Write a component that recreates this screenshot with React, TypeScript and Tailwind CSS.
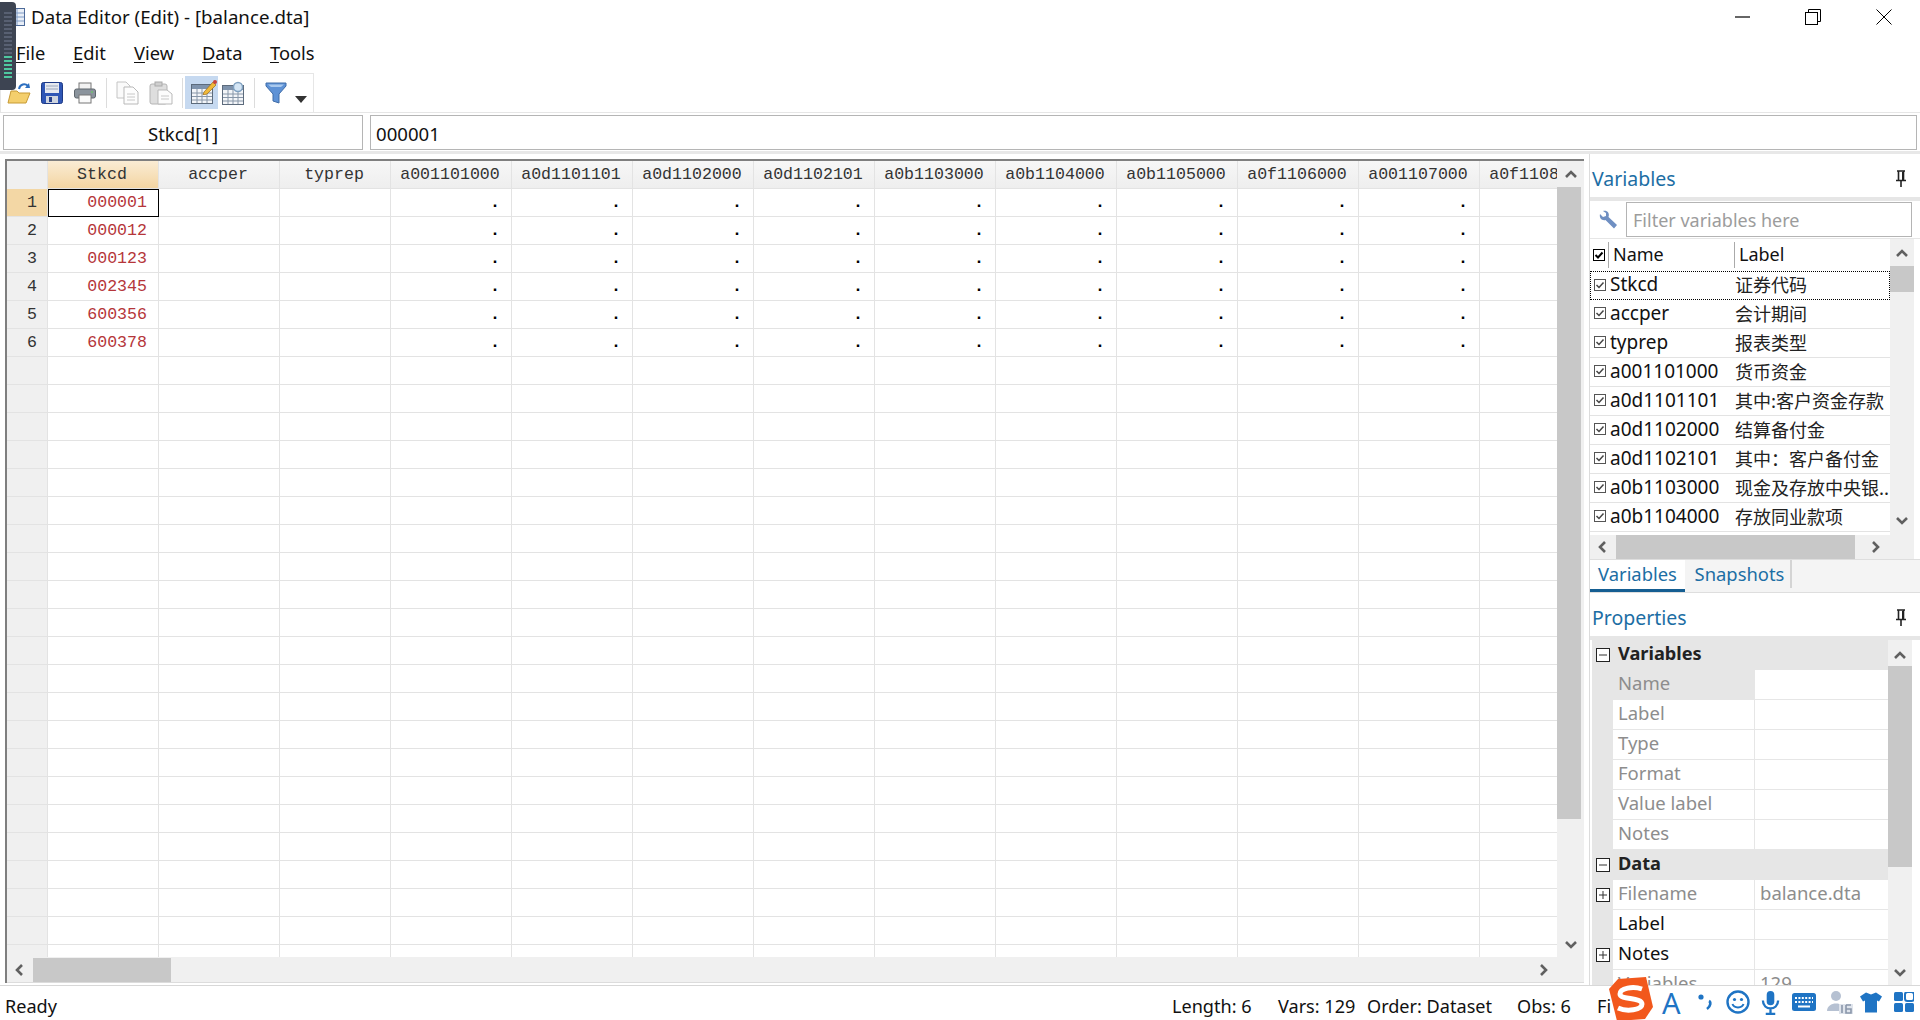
import type { ReactNode } from "react";

const cjk = "font-['Noto_Sans_CJK_SC','Noto_Sans',sans-serif]";

const colWidths = [111, 121, 111, 121, 121, 121, 121, 121, 121, 121, 121, 121, 121, 121];
const colNames = [
  "Stkcd",
  "accper",
  "typrep",
  "a001101000",
  "a0d1101101",
  "a0d1102000",
  "a0d1102101",
  "a0b1103000",
  "a0b1104000",
  "a0b1105000",
  "a0f1106000",
  "a001107000",
  "a0f1108000",
];
const stkcd = ["000001", "000012", "000123", "002345", "600356", "600378"];

const variables = [
  ["Stkcd", "证券代码"],
  ["accper", "会计期间"],
  ["typrep", "报表类型"],
  ["a001101000", "货币资金"],
  ["a0d1101101", "其中:客户资金存款"],
  ["a0d1102000", "结算备付金"],
  ["a0d1102101", "其中：客户备付金"],
  ["a0b1103000", "现金及存放中央银.."],
  ["a0b1104000", "存放同业款项"],
];

const Chevron = ({ dir, className }: { dir: "up" | "down" | "left" | "right"; className?: string }) => {
  const d = {
    up: "M2 9 L7 4 L12 9",
    down: "M2 5 L7 10 L12 5",
    left: "M9 2 L4 7 L9 12",
    right: "M5 2 L10 7 L5 12",
  }[dir];
  return (
    <svg viewBox="0 0 14 14" className={`w-[14px] h-[14px] ${className ?? ""}`}>
      <path d={d} fill="none" stroke="#606060" strokeWidth="2.6" />
    </svg>
  );
};

const Pin = () => (
  <svg viewBox="0 0 14 18" className="w-[14px] h-[18px]">
    <path d="M3 1 H11 M4.5 1 V10 M9.5 1 V10 M2 10.5 H12 M7 11 V17" fill="none" stroke="#222" strokeWidth="1.6" />
    <path d="M8 2 H9.5 V10 H8 Z" fill="#222" />
  </svg>
);

const GridIcon = ({ className }: { className?: string }) => (
  <svg viewBox="0 0 22 20" className={className}>
    <rect x="0.5" y="0.5" width="21" height="19" fill="#f3f5f8" stroke="#5d6b7c" />
    <rect x="1" y="1" width="20" height="4" fill="#7f93ac" />
    <path d="M1 9 H21 M1 12.5 H21 M1 16 H21 M6 5 V19 M11 5 V19 M16 5 V19" stroke="#8796a8" strokeWidth="1" />
  </svg>
);

const ToolbarIcons = () => (
  <div className="flex items-center h-full pl-[6px] pb-[1px]">
    <svg viewBox="0 0 24 24" className="w-[24px] h-[24px]">
      <path d="M1 22 L4 10 H10 L12 12 H23 L19 22 Z" fill="#f4cf6d" stroke="#c79a35" />
      <path d="M12 8 C13 3 18 2 21 5" fill="none" stroke="#2c6fc0" strokeWidth="2" />
      <path d="M18 7 L23 7 L22 2 Z" fill="#2c6fc0" />
    </svg>
    <svg viewBox="0 0 22 22" className="w-[22px] h-[22px] ml-[10px]">
      <rect x="0.5" y="0.5" width="21" height="21" rx="2" fill="#2f56b5" stroke="#1e3a85" />
      <rect x="4" y="1" width="14" height="10" fill="#e6e9ef" />
      <path d="M5 4 H17 M5 7 H17" stroke="#9aa6bd" />
      <rect x="5" y="14" width="12" height="7" fill="#cfd5df" />
      <rect x="8" y="15" width="3" height="5" fill="#27408a" />
    </svg>
    <svg viewBox="0 0 22 22" className="w-[22px] h-[22px] ml-[11px]">
      <rect x="5" y="1" width="12" height="7" fill="#f2f2f2" stroke="#777" />
      <rect x="0.5" y="7" width="21" height="9" rx="2" fill="#8a939c" stroke="#5f666d" />
      <rect x="5" y="13" width="12" height="8" fill="#fafafa" stroke="#777" />
      <circle cx="18" cy="10" r="1" fill="#6ec26e" />
    </svg>
    <div className="w-[1px] h-[30px] bg-[#dcdcdc] ml-[10px]" />
    <svg viewBox="0 0 24 24" className="w-[24px] h-[24px] ml-[9px]">
      <path d="M1 1 H10 L14 5 V17 H1 Z" fill="#fafafa" stroke="#c4c4c4" />
      <path d="M8 6 H17 L22 11 V23 H8 Z" fill="#fdfdfd" stroke="#b9b9b9" />
      <path d="M11 13 H19 M11 16 H19 M11 19 H19" stroke="#c8c8c8" />
    </svg>
    <svg viewBox="0 0 24 24" className="w-[24px] h-[24px] ml-[9px]">
      <rect x="1" y="3" width="17" height="20" rx="2" fill="#dedede" stroke="#b4b4b4" />
      <rect x="6" y="1" width="7" height="4" fill="#cfcfcf" stroke="#aaa" />
      <path d="M9 9 H18 L23 13 V23 H9 Z" fill="#fcfcfc" stroke="#b9b9b9" />
      <path d="M12 15 H20 M12 18 H20" stroke="#c8c8c8" />
    </svg>
    <div className="w-[1px] h-[30px] bg-[#dcdcdc] ml-[9px]" />
    <div className="relative w-[33px] h-[33px] bg-[#c6d9f0] ml-[2px] flex items-center justify-center">
      <GridIcon className="w-[22px] h-[20px] mt-[3px]" />
      <svg viewBox="0 0 16 16" className="absolute right-0 top-[3px] w-[16px] h-[16px]">
        <path d="M2 13 L11 3 L14 6 L5 15 L1 16 Z" fill="#f0b93a" stroke="#9a6a1a" strokeWidth="0.7" />
        <circle cx="13" cy="3" r="2" fill="#c9453b" />
      </svg>
    </div>
    <div className="relative w-[22px] h-[24px] ml-[4px]">
      <GridIcon className="w-[22px] h-[20px] mt-[4px]" />
      <svg viewBox="0 0 12 12" className="absolute right-0 top-0 w-[12px] h-[12px]">
        <circle cx="6" cy="6" r="4.5" fill="#d5e6f5" stroke="#7fa0c0" strokeWidth="1.4" />
      </svg>
    </div>
    <div className="w-[1px] h-[30px] bg-[#dcdcdc] ml-[10px]" />
    <svg viewBox="0 0 22 22" className="w-[22px] h-[22px] ml-[10px]">
      <path d="M1 1 H21 V4 L14 12 V21 L8 19 V12 L1 4 Z" fill="#5e92d6" stroke="#3f6ca8" />
      <path d="M3 2.5 H19 L16 5 H6 Z" fill="#a9c9ee" />
    </svg>
    <svg viewBox="0 0 12 7" className="w-[12px] h-[7px] ml-[8px] mt-[14px]">
      <path d="M0 0 H12 L6 7 Z" fill="#333" />
    </svg>
  </div>
);

const MenuItem = ({ first, rest, className }: { first: string; rest: string; className: string }) => (
  <span className={className}>
    <span className="underline underline-offset-2 decoration-1">{first}</span>
    {rest}
  </span>
);

const DataGrid = () => {
  const rows = Array.from({ length: 28 }, (_, i) => i);
  return (
    <div className="flex-1 min-w-0 flex flex-col overflow-hidden bg-white font-['Liberation_Mono',monospace] text-[16.6px] leading-[28px] text-[#333]">
      <div className="flex h-[28px] shrink-0">
        <div className="w-[41px] shrink-0 bg-[#f0f0f0] border-r border-[#e3e3e3]" />
        {colNames.map((name, i) => (
          <div
            key={name}
            style={{ width: colWidths[i] }}
            className={`shrink-0 text-center pr-[2px] border-r border-b border-[#e3e3e3] bg-gradient-to-b ${
              i === 0 ? "from-[#faecd4] to-[#f3d5a2]" : "from-[#f7f7f7] to-[#eeeeee]"
            }`}
          >
            {name}
          </div>
        ))}
      </div>
      {rows.map((r) => (
        <div key={r} className="flex h-[28px] shrink-0">
          <div
            className={`w-[41px] shrink-0 text-center pl-[10px] border-r border-b border-[#e3e3e3] ${
              r === 0 ? "bg-[#f3d7a5]" : "bg-[#f0f0f0]"
            }`}
          >
            {r < 6 ? r + 1 : ""}
          </div>
          {colNames.map((name, i) => (
            <div
              key={name}
              style={{ width: colWidths[i] }}
              className={`shrink-0 text-right pr-[11px] border-r border-b ${
                i === 0 && r === 0 ? "border-black shadow-[inset_1px_1px_0_0_#000]" : "border-[#e3e3e3]"
              } ${i === 0 ? "text-[#b5363a]" : "text-black font-bold"}`}
            >
              {r < 6 ? (i === 0 ? stkcd[r] : i > 2 && i < 12 ? "." : "") : ""}
            </div>
          ))}
        </div>
      ))}
    </div>
  );
};

const VCheck = ({ strong }: { strong?: boolean }) => (
  <svg viewBox="0 0 12 12" className="w-[12px] h-[12px] shrink-0">
    <rect x="0.5" y="0.5" width="11" height="11" fill="#fff" stroke={strong ? "#000" : "#555"} />
    <path d="M2.5 6 L5 8.5 L9.5 3.5" fill="none" stroke={strong ? "#000" : "#444"} strokeWidth={strong ? 2 : 1.5} />
  </svg>
);

const Box = ({ plus }: { plus?: boolean }) => (
  <svg viewBox="0 0 14 14" className="w-[14px] h-[14px]">
    <rect x="0.5" y="0.5" width="13" height="13" fill="#fff" stroke="#222" />
    <path d={plus ? "M3 7 H11 M7 3 V11" : "M3 7 H11"} stroke="#333" />
  </svg>
);

const PanelTitle = ({ children, className }: { children: ReactNode; className: string }) => (
  <div className={`flex items-center justify-between pl-[2px] pr-[12px] ${className}`}>
    <span className="text-[19.5px] text-[#1c6ea4]">{children}</span>
    <Pin />
  </div>
);

const VariablesPanel = () => (
  <>
    <PanelTitle className="h-[43px] pt-[7px]">Variables</PanelTitle>
    <div className="h-[4px] bg-[#e6e6e6]" />
    <div className="h-[38px] flex items-center border-b border-[#e6e6e6]">
      <svg viewBox="0 0 20 20" className="w-[20px] h-[20px] ml-[8px]">
        <path d="M2 4 L5 7 L8 6 L8 3 L5 1 C9 0 12 3 10.5 7 L19 15 L16 18.5 L7.5 10 C4 11 1 8 2 4 Z" fill="#6f8fc2" />
      </svg>
      <div className="ml-[8px] w-[286px] h-[35px] border border-[#b4b4b4] pl-[6px] text-[18px] leading-[35px] text-[#9c9c9c]">
        Filter variables here
      </div>
    </div>
    <div className="flex h-[296px]">
      <div className="w-[300px] shrink-0 flex flex-col overflow-hidden">
        <div className="flex items-center h-[32px] text-[18px] shrink-0">
          <div className="ml-[3px]">
            <VCheck strong />
          </div>
          <div className="h-[26px] w-[1px] bg-[#aaa] ml-[3px]" />
          <span className="w-[125px] pl-[4px] pb-[2px]">Name</span>
          <div className="h-[26px] w-[1px] bg-[#aaa]" />
          <span className="pl-[4px] pb-[2px]">Label</span>
        </div>
        {variables.map(([name, label], i) => (
          <div
            key={name}
            className={`flex items-center h-[29px] shrink-0 pb-[2px] border-b ${
              i === 0 ? "border border-dotted border-black" : "border-[#e3e3e3]"
            }`}
          >
            <div className={i === 0 ? "ml-[3px]" : "ml-[4px]"}>
              <VCheck />
            </div>
            <span className="w-[129px] pl-[4px] text-[19px] whitespace-nowrap">{name}</span>
            <span className={`${cjk} text-[18px] whitespace-nowrap text-[#222]`}>{label}</span>
          </div>
        ))}
      </div>
      <div className="w-[24px] bg-[#f0f0f0] flex flex-col items-center pt-[8px] pb-[8px]">
        <Chevron dir="up" />
        <div className="w-full h-[26px] bg-[#c8c8c8] mt-[5px] flex-none" />
        <div className="flex-1" />
        <Chevron dir="down" />
      </div>
    </div>
    <div className="h-[24px] w-[324px] bg-[#f0f0f0] flex items-center">
      <div className="w-[26px] flex justify-center">
        <Chevron dir="left" />
      </div>
      <div className="w-[239px] h-full bg-[#c8c8c8]" />
      <div className="ml-[13px]">
        <Chevron dir="right" />
      </div>
    </div>
    <div className="h-[34px] flex bg-[#f4f4f4] border-b border-t border-[#dedede] text-[18.4px] text-[#1c6ea4]">
      <div className="w-[95px] text-center leading-[28px] border-b-[3px] border-[#155e92] bg-white h-[32px]">
        Variables
      </div>
      <div className="ml-[2px] w-[105px] pl-[2px] text-center leading-[28px] border-r-[2px] border-[#d4d4d4] h-[28px]">
        Snapshots
      </div>
    </div>
  </>
);

const propRows: { label: string; value?: string; kind?: "head" | "dim" | "dark"; box?: "plus" | "minus"; fill?: boolean }[] = [
  { label: "Variables", kind: "head", box: "minus" },
  { label: "Name", kind: "dim", fill: true },
  { label: "Label", kind: "dim" },
  { label: "Type", kind: "dim" },
  { label: "Format", kind: "dim" },
  { label: "Value label", kind: "dim" },
  { label: "Notes", kind: "dim" },
  { label: "Data", kind: "head", box: "minus" },
  { label: "Filename", value: "balance.dta", kind: "dim", box: "plus" },
  { label: "Label", kind: "dark" },
  { label: "Notes", kind: "dark", box: "plus" },
  { label: "Variables", value: "129", kind: "dim" },
];

const PropertiesPanel = () => (
  <>
    <PanelTitle className="h-[43px] pt-[6px]">Properties</PanelTitle>
    <div className="h-[4px] bg-[#e6e6e6]" />
    <div className="flex flex-1 min-h-0 overflow-hidden pl-[2px]">
      <div className="w-[296px] shrink-0 flex flex-col">
        {propRows.map((row) =>
          row.kind === "head" ? (
            <div key={row.label} className="h-[30px] shrink-0 flex bg-[#e6e6e6]">
              <div className="w-[21px] flex justify-center items-center">
                <Box />
              </div>
              <span className="pl-[5px] leading-[26px] text-[18.2px] font-bold text-[#222]">{row.label}</span>
            </div>
          ) : (
            <div key={row.label + row.kind} className="h-[30px] shrink-0 flex bg-[#e6e6e6]">
              <div className="w-[21px] shrink-0 flex justify-center items-center">
                {row.box && <Box plus />}
              </div>
              <div
                className={`w-[142px] pl-[5px] leading-[26px] text-[18.5px] border-b border-r border-[#e6e6e6] ${
                  row.fill ? "bg-[#e6e6e6]" : "bg-white"
                } ${row.kind === "dark" ? "text-[#111]" : "text-[#8d8d8d]"}`}
              >
                {row.label}
              </div>
              <div className="flex-1 bg-white pl-[5px] leading-[26px] text-[18.5px] text-[#8d8d8d] border-b border-[#e6e6e6]">
                {row.value}
              </div>
            </div>
          ),
        )}
      </div>
      <div className="w-[24px] bg-[#f0f0f0] flex flex-col items-center pt-[9px] pb-[6px]">
        <Chevron dir="up" />
        <div className="w-full h-[201px] bg-[#c8c8c8] mt-[3px] flex-none" />
        <div className="flex-1" />
        <Chevron dir="down" />
      </div>
    </div>
  </>
);

const ImeBar = () => (
  <div className="absolute right-[3px] bottom-0 h-[42px] w-[308px] pt-[6px] flex items-center">
    <svg viewBox="0 0 44 44" className="w-[44px] h-[44px] shrink-0 -mt-[6px]">
      <path d="M9 2 L37 0 L44 30 L36 42 L8 44 L0 12 Z" fill="#f2581c" />
      <path d="M33 12 C24 9 11 11 11 17 C11 23 33 20 33 27 C33 33 18 35 9 31" fill="none" stroke="#fff" strokeWidth="5" />
    </svg>
    <span className="ml-[9px] w-[24px] text-[29px] leading-none font-['Noto_Sans',sans-serif] text-[#1f74c4]">A</span>
    <svg viewBox="0 0 16 20" className="w-[16px] h-[20px] ml-[11px]">
      <circle cx="4" cy="5" r="2.6" fill="#1f74c4" />
      <path d="M12 9 C14 10 14 14 10 17" fill="none" stroke="#1f74c4" strokeWidth="2.6" />
    </svg>
    <svg viewBox="0 0 24 24" className="w-[24px] h-[24px] ml-[13px]">
      <circle cx="12" cy="12" r="10.5" fill="none" stroke="#1f74c4" strokeWidth="2.4" />
      <circle cx="8.5" cy="9.5" r="1.6" fill="#1f74c4" />
      <circle cx="15.5" cy="9.5" r="1.6" fill="#1f74c4" />
      <path d="M6.5 14 C8 18.5 16 18.5 17.5 14" fill="none" stroke="#1f74c4" strokeWidth="2" />
    </svg>
    <svg viewBox="0 0 20 26" className="w-[19px] h-[25px] ml-[11px]">
      <rect x="6" y="1" width="8" height="15" rx="4" fill="#1f74c4" />
      <path d="M2 11 C2 22 18 22 18 11 M10 20 V24 M5 25 H15" fill="none" stroke="#1f74c4" strokeWidth="2.4" />
    </svg>
    <svg viewBox="0 0 24 18" className="w-[24px] h-[18px] ml-[12px]">
      <rect x="0" y="0" width="24" height="18" rx="2.5" fill="#1f74c4" />
      <path d="M3 5 H21 M3 9 H21" stroke="#fff" strokeWidth="2" strokeDasharray="2 1.4" />
      <path d="M6 13.5 H18" stroke="#fff" strokeWidth="2" />
    </svg>
    <div className="relative w-[26px] h-[24px] ml-[11px]">
      <svg viewBox="0 0 26 24" className="w-[26px] h-[24px]">
        <circle cx="9" cy="6" r="5" fill="#b6c1d2" />
        <path d="M0 21 C0 11 18 11 18 21 Z" fill="#b6c1d2" />
        <rect x="12" y="14" width="14" height="10" fill="#dfe4ec" />
        <path d="M15 15 V23 M19 15 H24 M19 15 V23 H24 V19 H19" fill="none" stroke="#8a97ab" strokeWidth="1.6" />
      </svg>
    </div>
    <svg viewBox="0 0 22 20" className="w-[22px] h-[21px] ml-[7px]">
      <path d="M6 0 L11 2 L16 0 L22 4 L19 9 L17 8 V20 H5 V8 L3 9 L0 4 Z" fill="#1f74c4" />
    </svg>
    <svg viewBox="0 0 20 20" className="w-[20px] h-[20px] ml-[12px]">
      <rect x="0" y="0" width="9" height="9" rx="1.5" fill="#1f74c4" />
      <rect x="11" y="0" width="9" height="9" rx="2.5" fill="none" stroke="#1f74c4" strokeWidth="2" />
      <rect x="0" y="11" width="9" height="9" rx="1.5" fill="#1f74c4" />
      <rect x="11" y="11" width="9" height="9" rx="1.5" fill="#1f74c4" />
    </svg>
  </div>
);

const StatusText = ({ children, className }: { children: ReactNode; className: string }) => (
  <span className={`whitespace-nowrap ${className}`}>{children}</span>
);

const App = () => {
  return (
    <div className="relative w-[1920px] h-[1020px] overflow-hidden bg-white flex flex-col text-[#111] font-['Noto_Sans',sans-serif]">
      <div className="absolute left-0 top-[2px] w-[16px] h-[88px] bg-[#3d4452] rounded-r-[4px] flex flex-col items-center pt-[10px] gap-[2px]">
        {Array.from({ length: 17 }, (_, i) => (
          <div key={i} className={`w-[8px] h-[2px] ${i > 10 ? "bg-[#4fc7a0]" : "bg-[#586072]"}`} />
        ))}
      </div>

      <header className="h-[34px] shrink-0 flex items-center">
        <svg viewBox="0 0 16 18" className="w-[16px] h-[18px] ml-[9px]">
          <rect x="0.5" y="0.5" width="15" height="17" fill="#e8eef7" stroke="#4d6a99" />
          <path d="M1 5 H15 M1 9 H15 M1 13 H15 M8 1 V17" stroke="#7f9ac4" />
        </svg>
        <span className="ml-[6px] text-[18.7px]">Data Editor (Edit) - [balance.dta]</span>
        <div className="flex-1" />
        <svg viewBox="0 0 16 16" className="w-[16px] h-[16px] mr-[54px]">
          <path d="M0 8 H15" stroke="#000" strokeWidth="1.2" />
        </svg>
        <svg viewBox="0 0 16 16" className="w-[16px] h-[16px] mr-[55px]">
          <path d="M3.5 3.5 V0.5 H15.5 V12.5 H12.5" fill="none" stroke="#000" />
          <rect x="0.5" y="3.5" width="12" height="12" fill="#fff" stroke="#000" />
        </svg>
        <svg viewBox="0 0 16 16" className="w-[16px] h-[16px] mr-[28px]">
          <path d="M0.5 0.5 L15.5 15.5 M15.5 0.5 L0.5 15.5" stroke="#000" />
        </svg>
      </header>

      <nav className="h-[39px] shrink-0 relative text-[18.3px] flex items-center pb-[2px] pl-[16px]">
        <MenuItem first="F" rest="ile" className="w-[57px]" />
        <MenuItem first="E" rest="dit" className="w-[61px]" />
        <MenuItem first="V" rest="iew" className="w-[68px]" />
        <MenuItem first="D" rest="ata" className="w-[68px]" />
        <MenuItem first="T" rest="ools" className="" />
      </nav>

      <div className="h-[40px] shrink-0 border-b border-[#e6e6e6]">
        <div className="w-[314px] h-full border border-b-0 border-[#e6e6e6]">
          <ToolbarIcons />
        </div>
      </div>

      <div className="h-[38px] shrink-0 flex pt-[2px] pl-[3px] pr-[3px] gap-[7px] text-[18.6px]">
        <div className="w-[360px] h-[35px] border border-[#b5b5b5] text-center leading-[35px]">Stkcd[1]</div>
        <div className="flex-1 h-[35px] border border-[#b5b5b5] pl-[5px] leading-[35px]">000001</div>
      </div>

      <div className="h-[834px] shrink-0 flex border-t-[3px] border-[#e8e8e8]">
        <div className="w-[1584px] shrink-0 pl-[5px] pt-[5px] pb-[2px] flex">
          <div className="flex-1 min-w-0 flex flex-col border-t-2 border-l-2 border-[#7f7f7f] bg-[#f0f0f0]">
            <div className="flex-1 min-h-0 flex">
              <DataGrid />
              <div className="w-[27px] shrink-0 flex flex-col items-center bg-[#f0f0f0] pt-[7px] pb-[6px]">
                <Chevron dir="up" />
                <div className="w-[24px] self-start h-[632px] bg-[#c8c8c8] mt-[5px]" />
                <div className="flex-1" />
                <Chevron dir="down" />
              </div>
            </div>
            <div className="h-[26px] shrink-0 flex items-center border-b border-[#dcdcdc]">
              <div className="w-[26px] flex justify-center">
                <Chevron dir="left" />
              </div>
              <div className="w-[138px] h-[24px] bg-[#c8c8c8]" />
              <div className="flex-1" />
              <div className="mr-[34px]">
                <Chevron dir="right" />
              </div>
            </div>
          </div>
        </div>
        <aside className="flex-1 min-w-0 ml-[5px] border-l border-[#dcdcdc] flex flex-col">
          <VariablesPanel />
          <PropertiesPanel />
        </aside>
      </div>

      <footer className="flex-1 relative flex items-center border-t border-[#d8d8d8] text-[18.1px] pl-[5px] pt-[7px] overflow-hidden">
        <StatusText className="w-[1167px]">Ready</StatusText>
        <StatusText className="w-[106px]">Length: 6</StatusText>
        <StatusText className="w-[89px]">Vars: 129</StatusText>
        <StatusText className="w-[150px]">Order: Dataset</StatusText>
        <StatusText className="w-[80px]">Obs: 6</StatusText>
        <StatusText className="">Fi</StatusText>
      </footer>
      <ImeBar />
    </div>
  );
};

export default App;
